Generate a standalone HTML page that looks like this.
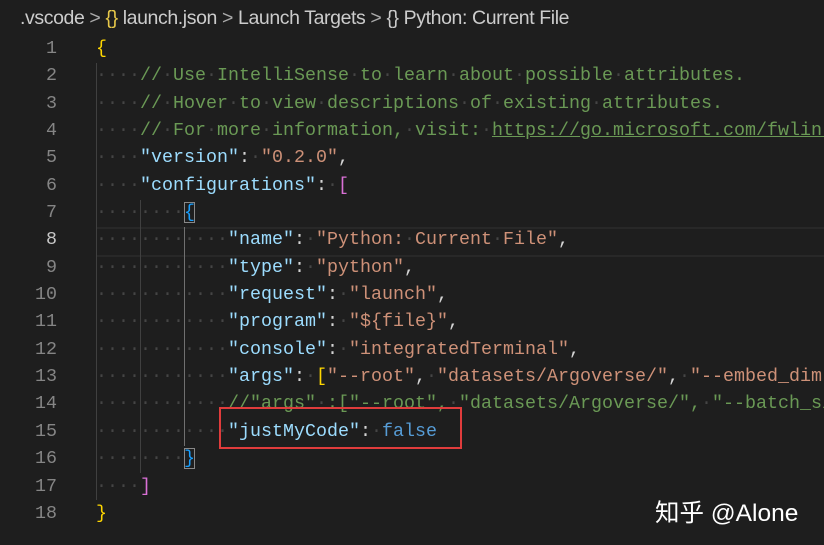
<!DOCTYPE html>
<html><head><meta charset="utf-8"><style>
html,body{margin:0;padding:0;width:824px;height:545px;overflow:hidden;background:#1e1e1e;}
.bc{position:absolute;left:20px;top:7px;font-family:"Liberation Sans",sans-serif;font-size:19.5px;color:#cccccc;white-space:pre;letter-spacing:-0.4px}
.bc .y{color:#e8c94a}
.ln{position:absolute;left:0;width:57px;text-align:right;font-family:"Liberation Mono",monospace;font-size:18.33px;color:#858585;line-height:27.35px}
.code{position:absolute;left:96px;width:728px;overflow:hidden;white-space:pre;font-family:"Liberation Mono",monospace;font-size:18.33px;line-height:27.35px;color:#d4d4d4}
b{font-weight:normal;color:#454545}
.k{color:#9cdcfe}.s{color:#ce9178}.c{color:#6a9955}.y1{color:#ffd700}.p{color:#da70d6}.bl{color:#179fff}.f{color:#569cd6}
.u{text-decoration:underline}
.g{position:absolute;width:1px;background:#404040}
</style></head><body>
<div class="bc">.vscode <span style="color:#aaa">&gt;</span> <span class="y">{}</span> launch.json <span style="color:#aaa">&gt;</span> Launch Targets <span style="color:#aaa">&gt;</span> {} Python: Current File</div>

<div style="position:absolute;left:96px;top:227px;width:728px;height:26px;border-top:2px solid #282828;border-bottom:2px solid #282828"></div>

<div class="g" style="left:96px;top:63px;height:437px"></div>
<div class="g" style="left:140px;top:200px;height:273px"></div>
<div class="g" style="left:184px;top:227px;height:219px;background:#707070"></div>

<div class="ln" style="top:35px">1<br>2<br>3<br>4<br>5<br>6<br>7<br><span style="color:#c6c6c6">8</span><br>9<br>10<br>11<br>12<br>13<br>14<br>15<br>16<br>17<br>18</div>

<div class="code" style="top:35px"><span class="y1">{</span>
<b>····</b><span class="c">//<b>·</b>Use<b>·</b>IntelliSense<b>·</b>to<b>·</b>learn<b>·</b>about<b>·</b>possible<b>·</b>attributes.</span>
<b>····</b><span class="c">//<b>·</b>Hover<b>·</b>to<b>·</b>view<b>·</b>descriptions<b>·</b>of<b>·</b>existing<b>·</b>attributes.</span>
<b>····</b><span class="c">//<b>·</b>For<b>·</b>more<b>·</b>information,<b>·</b>visit:<b>·</b><span class="u">https://go.microsoft.com/fwlink/?linkid=830387</span></span>
<b>····</b><span class="k">"version"</span>:<b>·</b><span class="s">"0.2.0"</span>,
<b>····</b><span class="k">"configurations"</span>:<b>·</b><span class="p">[</span>
<b>········</b><span class="bl" style="outline:1px solid #888;outline-offset:-1px">{</span>
<b>············</b><span class="k">"name"</span>:<b>·</b><span class="s">"Python:<b>·</b>Current<b>·</b>File"</span>,
<b>············</b><span class="k">"type"</span>:<b>·</b><span class="s">"python"</span>,
<b>············</b><span class="k">"request"</span>:<b>·</b><span class="s">"launch"</span>,
<b>············</b><span class="k">"program"</span>:<b>·</b><span class="s">"${file}"</span>,
<b>············</b><span class="k">"console"</span>:<b>·</b><span class="s">"integratedTerminal"</span>,
<b>············</b><span class="k">"args"</span>:<b>·</b><span class="y1">[</span><span class="s">"--root"</span>,<b>·</b><span class="s">"datasets/Argoverse/"</span>,<b>·</b><span class="s">"--embed_dim"</span>
<b>············</b><span class="c">//"args"<b>·</b>:["--root",<b>·</b>"datasets/Argoverse/",<b>·</b>"--batch_size"</span>
<b>············</b><span class="k">"justMyCode"</span>:<b>·</b><span class="f">false</span>
<b>········</b><span class="bl" style="outline:1px solid #888;outline-offset:-1px">}</span>
<b>····</b><span class="p">]</span>
<span class="y1">}</span></div>

<div style="position:absolute;left:219px;top:407px;width:239px;height:38px;border:2px solid #e03c3c"></div>

<div style="position:absolute;left:655px;top:494px;font-family:'Liberation Sans','Noto Sans CJK SC',sans-serif;font-size:24.5px;color:#fff;white-space:pre">知乎 @Alone</div>
</body></html>
